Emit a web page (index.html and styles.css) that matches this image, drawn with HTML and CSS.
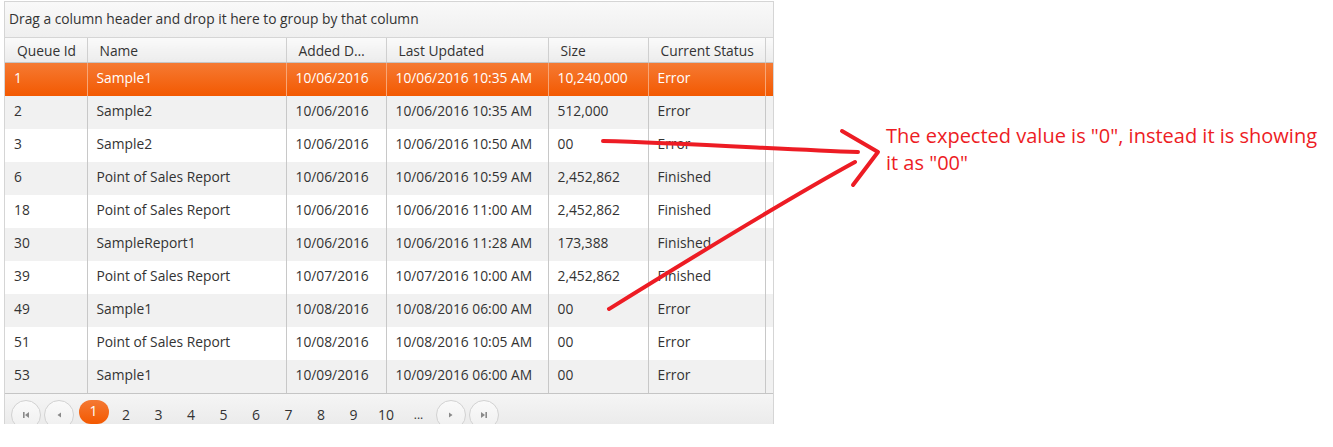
FILE: index.html
```html
<!DOCTYPE html>
<html lang="en">
<head>
  <meta charset="UTF-8" />
  <title>Report Queue</title>
  <link rel="stylesheet" href="styles.css">
</head>
<body>

  <div class="layout">
    <!-- Grid -->
    <div class="grid">
      <div class="group-header">Drag a column header and drop it here to group by that column</div>

      <table class="grid-table">
        <colgroup>
          <col class="c-id">
          <col class="c-name">
          <col class="c-added">
          <col class="c-updated">
          <col class="c-size">
          <col class="c-status">
          <col class="c-fill">
        </colgroup>
        <thead>
          <tr>
            <th>Queue Id</th>
            <th>Name</th>
            <th class="narrow">Added Date</th>
            <th>Last Updated</th>
            <th>Size</th>
            <th>Current Status</th>
            <th class="fill"></th>
          </tr>
        </thead>
        <tbody>
          <tr class="selected">
            <td>1</td><td>Sample1</td><td>10/06/2016</td><td>10/06/2016 10:35 AM</td><td>10,240,000</td><td>Error</td><td class="fill"></td>
          </tr>
          <tr>
            <td>2</td><td>Sample2</td><td>10/06/2016</td><td>10/06/2016 10:35 AM</td><td>512,000</td><td>Error</td><td class="fill"></td>
          </tr>
          <tr>
            <td>3</td><td>Sample2</td><td>10/06/2016</td><td>10/06/2016 10:50 AM</td><td>00</td><td>Error</td><td class="fill"></td>
          </tr>
          <tr>
            <td>6</td><td>Point of Sales Report</td><td>10/06/2016</td><td>10/06/2016 10:59 AM</td><td>2,452,862</td><td>Finished</td><td class="fill"></td>
          </tr>
          <tr>
            <td>18</td><td>Point of Sales Report</td><td>10/06/2016</td><td>10/06/2016 11:00 AM</td><td>2,452,862</td><td>Finished</td><td class="fill"></td>
          </tr>
          <tr>
            <td>30</td><td>SampleReport1</td><td>10/06/2016</td><td>10/06/2016 11:28 AM</td><td>173,388</td><td>Finished</td><td class="fill"></td>
          </tr>
          <tr>
            <td>39</td><td>Point of Sales Report</td><td>10/07/2016</td><td>10/07/2016 10:00 AM</td><td>2,452,862</td><td>Finished</td><td class="fill"></td>
          </tr>
          <tr>
            <td>49</td><td>Sample1</td><td>10/08/2016</td><td>10/08/2016 06:00 AM</td><td>00</td><td>Error</td><td class="fill"></td>
          </tr>
          <tr>
            <td>51</td><td>Point of Sales Report</td><td>10/08/2016</td><td>10/08/2016 10:05 AM</td><td>00</td><td>Error</td><td class="fill"></td>
          </tr>
          <tr>
            <td>53</td><td>Sample1</td><td>10/09/2016</td><td>10/09/2016 06:00 AM</td><td>00</td><td>Error</td><td class="fill"></td>
          </tr>
        </tbody>
      </table>

      <!-- Pager -->
      <div class="pager">
        <span class="pager-btn">
          <svg width="10" height="10" viewBox="0 0 10 10"><rect x="2" y="2" width="1.6" height="6" fill="#8a8a8a"/><path d="M8 2 L4 5 L8 8 Z" fill="#8a8a8a"/></svg>
        </span>
        <span class="pager-btn prev">
          <svg width="10" height="10" viewBox="0 0 10 10"><path d="M7 2.5 L3.5 5 L7 7.5 Z" fill="#8a8a8a"/></svg>
        </span>
        <span class="page-num current">1</span>
        <span class="page-num">2</span>
        <span class="page-num">3</span>
        <span class="page-num">4</span>
        <span class="page-num">5</span>
        <span class="page-num">6</span>
        <span class="page-num">7</span>
        <span class="page-num">8</span>
        <span class="page-num">9</span>
        <span class="page-num">10</span>
        <span class="page-num more">...</span>
        <span class="pager-btn">
          <svg width="10" height="10" viewBox="0 0 10 10"><path d="M3 2.5 L6.5 5 L3 7.5 Z" fill="#8a8a8a"/></svg>
        </span>
        <span class="pager-btn">
          <svg width="10" height="10" viewBox="0 0 10 10"><path d="M2 2 L6 5 L2 8 Z" fill="#8a8a8a"/><rect x="6.4" y="2" width="1.6" height="6" fill="#8a8a8a"/></svg>
        </span>
      </div>
    </div>

    <!-- Annotation -->
    <div class="note">The expected value is "0", instead it is showing it as "00"</div>
  </div>

  <!-- Hand-drawn arrows over the screenshot -->
  <svg class="arrows" width="1333" height="447" viewBox="0 0 1333 447">
    <g fill="none" stroke="#ed1c24" stroke-width="4" stroke-linecap="round" stroke-linejoin="round">
      <path d="M603 141 C 680 143, 780 149, 858 152"/>
      <path d="M609 309 C 680 265, 780 203, 855 162"/>
      <path d="M842 131 L878 152 L853 185"/>
    </g>
  </svg>

</body>
</html>
```

FILE: styles.css
```css
body {
  margin: 0;
  font-family: "Open Sans", sans-serif;
  background-color: #fff;
  color: #333;
}

.layout {
  display: flex;
  align-items: flex-start;
  padding: 1px 0 0 4px;
}

/* Grid */
.grid {
  width: 768px;
  flex: none;
  border: 1px solid #d5d5d5;
  border-bottom: none;
  font-size: 13.8px;
}

.group-header {
  height: 35px;
  line-height: 34px;
  padding-left: 4px;
  background: linear-gradient(#f9f9f9, #efefef);
  border-bottom: 1px solid #d5d5d5;
  white-space: nowrap;
}

.grid-table {
  width: 768px;
  border-collapse: collapse;
  table-layout: fixed;
}

.c-id { width: 82px; }
.c-name { width: 199px; }
.c-added { width: 100px; }
.c-updated { width: 162px; }
.c-size { width: 100px; }
.c-status { width: 117px; }
.c-fill { width: 8px; }

.grid-table th {
  height: 20px;
  padding: 1px 4px 1px 12px;
  font-weight: normal;
  text-align: left;
  background: linear-gradient(#fafafa, #ececec);
  border-right: 1px solid #cfcfcf;
  border-bottom: 1px solid #c5c5c5;
  white-space: nowrap;
  overflow: hidden;
  text-overflow: ellipsis;
}

.grid-table th.narrow {
  padding-right: 14px;
}

.grid-table td {
  height: 29px;
  padding: 0 4px 4px 9px;
  border-right: 1px solid #c8c8c8;
  white-space: nowrap;
  overflow: hidden;
}

.grid-table .fill {
  border-right: none;
  padding: 0 0 4px;
}

.grid-table tbody tr:nth-child(even) {
  background-color: #f1f1f1;
}

.grid-table tr.selected {
  background: linear-gradient(#f57a33, #f35800);
  color: #fff;
}

.grid-table tr.selected td {
  border-right-color: #f8a676;
}

.grid-table tr.selected td.fill {
  border-right: none;
}

/* Pager */
.pager {
  height: 31px;
  overflow: hidden;
  display: flex;
  align-items: flex-start;
  gap: 2.5px;
  padding: 6px 0 0 6px;
  border-top: 1px solid #c5c5c5;
  background: linear-gradient(#f5f5f5, #ebebeb);
  box-sizing: border-box;
}

.pager-btn {
  width: 28px;
  height: 28px;
  flex: none;
  border: 1px solid #d2d2d2;
  border-radius: 50%;
  background: linear-gradient(#fafafa, #efefef);
  display: flex;
  align-items: center;
  justify-content: center;
}

.pager-btn.prev {
  margin-right: 2.5px;
}

.page-num {
  width: 30px;
  height: 24px;
  flex: none;
  line-height: 24px;
  text-align: center;
  font-size: 14px;
  margin-top: 3px;
}

.page-num.current {
  margin-top: 0;
  line-height: 22px;
  border-radius: 12px;
  background: linear-gradient(#f47934, #f35800);
  color: #fff;
}

.page-num.more {
  font-size: 12px;
}

/* Annotation */
.note {
  width: 440px;
  margin: 121px 0 0 112px;
  font-size: 20px;
  line-height: 27px;
  color: #ed1c24;
}

.arrows {
  position: absolute;
  top: 0;
  left: 0;
  pointer-events: none;
}
```
